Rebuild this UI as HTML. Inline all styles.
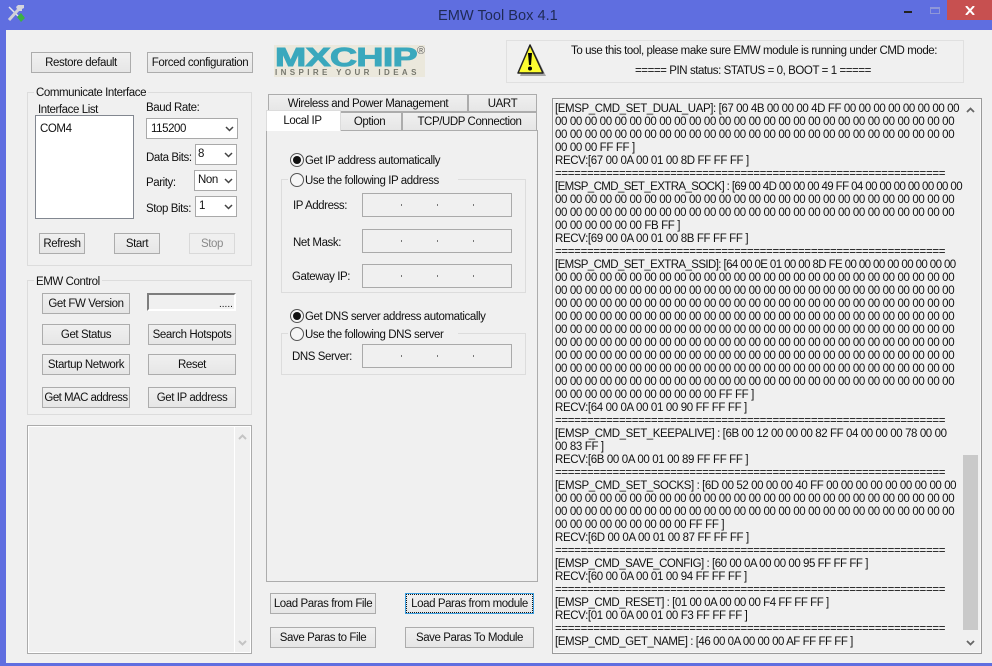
<!DOCTYPE html>
<html>
<head>
<meta charset="utf-8">
<style>
html,body{margin:0;padding:0;width:992px;height:666px;overflow:hidden;background:#5f6ee0}
body{position:relative;font:11.5px/13px "Liberation Sans",sans-serif;letter-spacing:-.42px;color:#111}
div,span,pre{position:absolute;box-sizing:border-box;margin:0}
#win{left:6px;top:30px;width:986px;height:633px;background:#f0f0f0}
.b{background:linear-gradient(#f0f0f0,#e6e6e6);border:1px solid #acacac;text-align:center;line-height:21px;white-space:nowrap;color:#111}
.g{border:1px solid #dcdcdc}
.t{white-space:nowrap;line-height:13px;margin-top:1px}
.bgt{background:#f0f0f0;padding:0 2px}
.box{background:#fff;border:1px solid #828790}
.c{background:#fff;border:1px solid #a9a9a9;white-space:nowrap;line-height:19px;padding-left:4px}
.c svg{position:absolute;right:3px;top:7px}
.tab{background:linear-gradient(#f0f0f0,#e6e6e6);border:1px solid #acacac;text-align:center;white-space:nowrap;line-height:19px}
.ip{background:#f0f0f0;border:1px solid #aaa}
.ip span{top:10px;width:1px;height:2px;background:#777}
.r{width:14px;height:14px;border:1px solid #555;border-radius:50%;background:#f6f6f6}
.r i{position:absolute;left:2px;top:2px;width:8px;height:8px;border-radius:50%;background:#111}
.e{font-style:normal;letter-spacing:-.32px}
.n{font-style:normal;letter-spacing:-.41px}
.m{font-style:normal;letter-spacing:-.46px}
.w{font-style:normal;letter-spacing:-.6px}
</style>
</head>
<body>
<svg style="position:absolute;left:0;top:0" width="30" height="28" viewBox="0 0 30 28"><path d="M9 7l9 9" stroke="#e4e4ee" stroke-width="1.500"/><path d="M9 20L18 10" stroke="#d0d0d8" stroke-width="3"/><path d="M16 7l2-2h6v3l-2 1v2h-4z" fill="#d4d4dc"/><path d="M17 17l4-4 4 5-4 4z" fill="#3cb043"/></svg>
<div class="t" style="left:438px;top:7px;font-size:14.6px;line-height:16px;letter-spacing:0;color:#1f2a55">EMW Tool Box 4.1</div>
<div style="left:904px;top:11px;width:8px;height:2px;background:#222"></div>
<div style="left:930px;top:7px;width:10px;height:7px;border:1px solid #8f97d8;border-top-width:2px"></div>
<div style="left:947px;top:0;width:45px;height:20px;background:#c75050"></div>
<svg style="position:absolute;left:965px;top:6px" width="10" height="9"><path d="M1 0l8 9M9 0L1 9" stroke="#fff" stroke-width="2"/></svg>
<div id="win"></div>

<div class="b" style="left:31px;top:52px;width:100px;height:21px">Restore default</div>
<div class="b" style="left:147px;top:52px;width:106px;height:21px">Forced configuration</div>

<div style="left:274px;top:45px;width:151px;height:32px;background:#ebe8dc"></div>
<svg style="position:absolute;left:274px;top:43px" width="154" height="35" viewBox="0 0 154 35"><text x="1" y="23" font-family="Liberation Sans" font-weight="bold" font-size="26" fill="#3aa8bd" textLength="142" lengthAdjust="spacingAndGlyphs" stroke="#3aa8bd" stroke-width="1">MXCHIP</text><text x="1" y="32" font-family="Liberation Sans" font-weight="bold" font-size="8" fill="#77786e" textLength="141" lengthAdjust="spacing">INSPIRE YOUR IDEAS</text><text x="143" y="11" font-family="Liberation Sans" font-size="11" fill="#666">®</text></svg>

<div style="left:506px;top:40px;width:458px;height:43px;border:1px solid #e0e0e0"></div>
<svg style="position:absolute;left:515px;top:44px" width="34" height="34" viewBox="0 0 34 34"><path d="M17 3L31 32 5 32z" fill="#777" opacity=".6"/><path d="M15 1L28 29H3z" fill="#fdfd30" stroke="#222" stroke-width="1.500" stroke-linejoin="round"/><path d="M13 9h4l-1 12h-2z" fill="#000"/><circle cx="15" cy="24.500" r="2" fill="#000"/></svg>
<div class="t" style="left:571px;top:44px">To use this tool, please make sure EMW module is running under CMD mode:</div>
<div class="t" style="left:635px;top:64px">===== PIN status: STATUS = 0, BOOT = 1 =====</div>

<!-- Communicate -->
<div class="g" style="left:27px;top:92px;width:225px;height:174px"></div>
<div class="t bgt" style="left:34px;top:86px">Communicate Interface</div>
<div class="t" style="left:38px;top:103px">Interface List</div>
<div class="box" style="left:35px;top:115px;width:99px;height:104px"></div>
<div class="t" style="left:40px;top:122px">COM4</div>
<div class="t" style="left:146px;top:101px">Baud Rate:</div>
<div class="c" style="left:146px;top:118px;width:92px;height:21px;line-height:20px">115200<svg width="9" height="6"><path d="M1 1l3.500 3.500L8 1" fill="none" stroke="#444" stroke-width="1.500"/></svg></div>
<div class="t" style="left:146px;top:151px">Data Bits:</div>
<div class="c" style="left:195px;top:144px;width:42px;height:21px;padding-left:2px">8<svg width="9" height="6"><path d="M1 1l3.500 3.500L8 1" fill="none" stroke="#444" stroke-width="1.500"/></svg></div>
<div class="t" style="left:146px;top:176px">Parity:</div>
<div class="c" style="left:194px;top:170px;width:43px;height:21px;padding-left:3px">Non<svg width="9" height="6"><path d="M1 1l3.500 3.500L8 1" fill="none" stroke="#444" stroke-width="1.500"/></svg></div>
<div class="t" style="left:146px;top:202px">Stop Bits:</div>
<div class="c" style="left:195px;top:196px;width:42px;height:21px;padding-left:3px">1<svg width="9" height="6"><path d="M1 1l3.500 3.500L8 1" fill="none" stroke="#444" stroke-width="1.500"/></svg></div>
<div class="b" style="left:39px;top:233px;width:46px;height:21px">Refresh</div>
<div class="b" style="left:114px;top:233px;width:46px;height:21px">Start</div>
<div class="b" style="left:189px;top:233px;width:46px;height:21px;border-color:#d9d9d9;color:#8a8a8a;background:#efefef">Stop</div>

<!-- EMW Control -->
<div class="g" style="left:27px;top:280px;width:225px;height:135px"></div>
<div class="t bgt" style="left:34px;top:275px">EMW Control</div>
<div class="b" style="left:42px;top:293px;width:88px;height:21px">Get FW Version</div>
<div style="left:147px;top:293px;width:89px;height:18px;background:#f0f0f0;border-top:2px solid #7d7d7d;border-left:2px solid #7d7d7d;border-right:2px solid #fff;border-bottom:2px solid #fff"></div>
<div class="t" style="left:219px;top:297px;letter-spacing:0;font-size:10px">.....</div>
<div class="b" style="left:42px;top:324px;width:88px;height:21px">Get Status</div>
<div class="b" style="left:148px;top:324px;width:88px;height:21px">Search Hotspots</div>
<div class="b" style="left:42px;top:354px;width:88px;height:21px">Startup Network</div>
<div class="b" style="left:148px;top:354px;width:88px;height:21px">Reset</div>
<div class="b" style="left:42px;top:387px;width:88px;height:21px;letter-spacing:-.55px">Get MAC address</div>
<div class="b" style="left:148px;top:387px;width:88px;height:21px">Get IP address</div>

<!-- small log -->
<div style="left:27px;top:425px;width:225px;height:229px;border:1px solid #ababab;outline:1px solid #fff;outline-offset:-2px"></div>
<div style="left:234px;top:426px;width:1px;height:227px;background:#fff"></div>
<svg style="position:absolute;left:238px;top:434px" width="9" height="6"><path d="M1 5l3.500-3.500L8 5" fill="none" stroke="#c4c4c4" stroke-width="2"/></svg>
<svg style="position:absolute;left:238px;top:640px" width="9" height="6"><path d="M1 1l3.500 3.500L8 1" fill="none" stroke="#c4c4c4" stroke-width="2"/></svg>

<!-- Tabs -->
<div class="tab" style="left:268px;top:94px;width:200px;height:18px">Wireless and Power Management</div>
<div class="tab" style="left:468px;top:94px;width:69px;height:18px">UART</div>
<div class="tab" style="left:340px;top:112px;width:62px;height:19px;padding-right:3px">Option</div>
<div class="tab" style="left:402px;top:112px;width:135px;height:19px">TCP/UDP Connection</div>
<div style="left:266px;top:130px;width:272px;height:452px;border:1px solid #acacac;background:#f0f0f0"></div>
<div style="left:266px;top:110px;width:75px;height:21px;background:#fff;border:1px solid #dcdcdc;border-bottom:0;text-align:center;line-height:20px;padding-right:2px;white-space:nowrap">Local IP</div>

<div class="g" style="left:281px;top:179px;width:245px;height:114px"></div>
<div class="r" style="left:290px;top:153px"><i></i></div>
<div class="t" style="left:305px;top:154px">Get IP address automatically</div>
<div class="bgt" style="left:288px;top:173px;height:14px;width:170px"></div>
<div class="r" style="left:290px;top:173px"></div>
<div class="t" style="left:305px;top:174px">Use the following IP address</div>
<div class="t" style="left:293px;top:199px">IP Address:</div>
<div class="ip" style="left:362px;top:193px;width:150px;height:24px"><span style="left:38px"></span><span style="left:74px"></span><span style="left:110px"></span></div>
<div class="t" style="left:293px;top:236px">Net Mask:</div>
<div class="ip" style="left:362px;top:229px;width:150px;height:24px"><span style="left:38px"></span><span style="left:74px"></span><span style="left:110px"></span></div>
<div class="t" style="left:292px;top:270px">Gateway IP:</div>
<div class="ip" style="left:362px;top:264px;width:150px;height:24px"><span style="left:38px"></span><span style="left:74px"></span><span style="left:110px"></span></div>

<div class="g" style="left:281px;top:333px;width:245px;height:42px"></div>
<div class="r" style="left:290px;top:309px"><i></i></div>
<div class="t" style="left:305px;top:310px">Get DNS server address automatically</div>
<div class="bgt" style="left:288px;top:327px;height:14px;width:170px"></div>
<div class="r" style="left:290px;top:327px"></div>
<div class="t" style="left:305px;top:328px">Use the following DNS server</div>
<div class="t" style="left:292px;top:350px">DNS Server:</div>
<div class="ip" style="left:362px;top:344px;width:150px;height:24px"><span style="left:38px"></span><span style="left:74px"></span><span style="left:110px"></span></div>

<div class="b" style="left:270px;top:593px;width:106px;height:21px">Load Paras from File</div>
<div class="b" style="left:270px;top:627px;width:106px;height:21px">Save Paras to File</div>
<div class="b" style="left:405px;top:593px;width:129px;height:21px;border-color:#3c9fe0;outline:1px dotted #111;outline-offset:-2px">Load Paras from module</div>
<div class="b" style="left:405px;top:627px;width:129px;height:21px">Save Paras To Module</div>

<!-- Log -->
<div style="left:552px;top:98px;width:430px;height:556px;border:1px solid #9a9a9a;outline:1px solid #f8f8f8;outline-offset:-2px;background:#f0f0f0"></div>
<div style="left:963px;top:455px;width:15px;height:175px;background:#c9c9c9"></div>
<svg style="position:absolute;left:966px;top:107px" width="9" height="6"><path d="M1 5l3.500-3.500L8 5" fill="none" stroke="#666" stroke-width="1.800"/></svg>
<svg style="position:absolute;left:966px;top:640px" width="9" height="6"><path d="M1 1l3.500 3.500L8 1" fill="none" stroke="#666" stroke-width="1.800"/></svg>
<pre style="left:555px;top:103px;width:408px;height:548px;overflow:hidden;font:11.5px/13px 'Liberation Sans',sans-serif;letter-spacing:-.365px;color:#111"><i class="n">[EMSP_CMD_SET_DUAL_UAP]: [67 00 4B 00 00 00 4D FF 00 00 00 00 00 00 00 00</i>
00 00 00 00 00 00 00 00 00 00 00 00 00 00 00 00 00 00 00 00 00 00 00 00 00 00 00
00 00 00 00 00 00 00 00 00 00 00 00 00 00 00 00 00 00 00 00 00 00 00 00 00 00 00
00 00 00 FF FF ]
RECV:[67 00 0A 00 01 00 8D FF FF FF ]
<i class="e">=============================================================</i>
<i class="w">[EMSP_CMD_SET_EXTRA_SOCK] : [69 00 4D 00 00 00 49 FF 04 00 00 00 00 00 00 00</i>
00 00 00 00 00 00 00 00 00 00 00 00 00 00 00 00 00 00 00 00 00 00 00 00 00 00 00
00 00 00 00 00 00 00 00 00 00 00 00 00 00 00 00 00 00 00 00 00 00 00 00 00 00 00
00 00 00 00 00 00 FB FF ]
RECV:[69 00 0A 00 01 00 8B FF FF FF ]
<i class="e">=============================================================</i>
<i class="w">[EMSP_CMD_SET_EXTRA_SSID]: [64 00 0E 01 00 00 8D FE 00 00 00 00 00 00 00 00</i>
00 00 00 00 00 00 00 00 00 00 00 00 00 00 00 00 00 00 00 00 00 00 00 00 00 00 00
00 00 00 00 00 00 00 00 00 00 00 00 00 00 00 00 00 00 00 00 00 00 00 00 00 00 00
00 00 00 00 00 00 00 00 00 00 00 00 00 00 00 00 00 00 00 00 00 00 00 00 00 00 00
00 00 00 00 00 00 00 00 00 00 00 00 00 00 00 00 00 00 00 00 00 00 00 00 00 00 00
00 00 00 00 00 00 00 00 00 00 00 00 00 00 00 00 00 00 00 00 00 00 00 00 00 00 00
00 00 00 00 00 00 00 00 00 00 00 00 00 00 00 00 00 00 00 00 00 00 00 00 00 00 00
00 00 00 00 00 00 00 00 00 00 00 00 00 00 00 00 00 00 00 00 00 00 00 00 00 00 00
00 00 00 00 00 00 00 00 00 00 00 00 00 00 00 00 00 00 00 00 00 00 00 00 00 00 00
00 00 00 00 00 00 00 00 00 00 00 00 00 00 00 00 00 00 00 00 00 00 00 00 00 00 00
00 00 00 00 00 00 00 00 00 00 00 FF FF ]
RECV:[64 00 0A 00 01 00 90 FF FF FF ]
<i class="e">=============================================================</i>
<i class="n">[EMSP_CMD_SET_KEEPALIVE] : [6B 00 12 00 00 00 82 FF 04 00 00 00 78 00 00</i>
00 83 FF ]
RECV:[6B 00 0A 00 01 00 89 FF FF FF ]
<i class="e">=============================================================</i>
<i class="n">[EMSP_CMD_SET_SOCKS] : [6D 00 52 00 00 00 40 FF 00 00 00 00 00 00 00 00 00</i>
00 00 00 00 00 00 00 00 00 00 00 00 00 00 00 00 00 00 00 00 00 00 00 00 00 00 00
00 00 00 00 00 00 00 00 00 00 00 00 00 00 00 00 00 00 00 00 00 00 00 00 00 00 00
00 00 00 00 00 00 00 00 00 FF FF ]
RECV:[6D 00 0A 00 01 00 87 FF FF FF ]
<i class="e">=============================================================</i>
<i class="m">[EMSP_CMD_SAVE_CONFIG] : [60 00 0A 00 00 00 95 FF FF FF ]</i>
RECV:[60 00 0A 00 01 00 94 FF FF FF ]
<i class="e">=============================================================</i>
<i class="m">[EMSP_CMD_RESET] : [01 00 0A 00 00 00 F4 FF FF FF ]</i>
RECV:[01 00 0A 00 01 00 F3 FF FF FF ]
<i class="e">=============================================================</i>
<i class="m">[EMSP_CMD_GET_NAME] : [46 00 0A 00 00 00 AF FF FF FF ]</i></pre>
</body>
</html>
